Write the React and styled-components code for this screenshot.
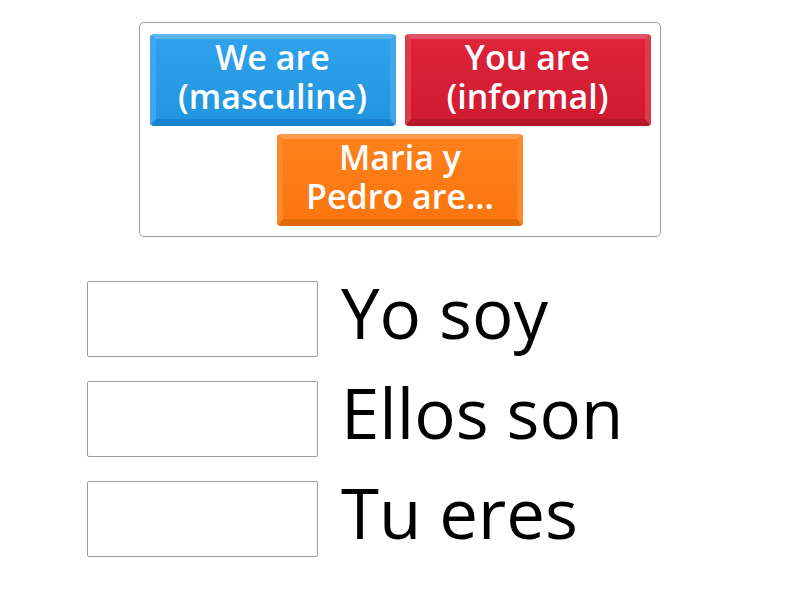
import React from "react";
import styled, { createGlobalStyle } from "styled-components";

const Global = createGlobalStyle`
  html, body { margin: 0; padding: 0; background: #fff; }
  body { font-family: "Open Sans", "Noto Sans", sans-serif; }
`;

const Page = styled.div`
  width: 800px;
  height: 600px;
  display: flex;
  flex-direction: column;
  align-items: center;
  padding-top: 22px;
  box-sizing: border-box;
`;

const Bank = styled.div`
  width: 522px;
  height: 215px;
  box-sizing: border-box;
  border: 1px solid #9a9a9a;
  border-radius: 5px;
  padding: 11px 9px;
  display: flex;
  flex-wrap: wrap;
  justify-content: center;
  align-content: flex-start;
  gap: 8px 9px;
`;

const palettes = {
  blue: { top: "#5ab6f1", side: "#3fa7ec", bottom: "#1a84d0", g1: "#30a2ec", g2: "#2295e0" },
  red: { top: "#e2536a", side: "#de3a4f", bottom: "#b8172a", g1: "#de2439", g2: "#cf1b30" },
  orange: { top: "#ff9c4c", side: "#ff8a2e", bottom: "#e0690b", g1: "#ff801b", g2: "#fb760f" },
};

const Tile = styled.div`
  width: 246px;
  height: 92px;
  box-sizing: border-box;
  border-radius: 4px;
  border-style: solid;
  border-width: 5px 6px 7px 6px;
  border-top-color: ${(p) => palettes[p.$c].top};
  border-left-color: ${(p) => palettes[p.$c].side};
  border-right-color: ${(p) => palettes[p.$c].side};
  border-bottom-color: ${(p) => palettes[p.$c].bottom};
  background: linear-gradient(${(p) => palettes[p.$c].g1}, ${(p) => palettes[p.$c].g2});
  display: flex;
  align-items: center;
  justify-content: center;
  text-align: center;
  color: #fff;
  font-family: "Open Sans", sans-serif;
  font-weight: 600;
  font-size: 34px;
  line-height: 39px;
  padding-bottom: 5px;
`;

const Rows = styled.div`
  margin-top: 44px;
  width: 800px;
  display: flex;
  flex-direction: column;
  gap: 24px;
  padding-left: 87px;
  box-sizing: border-box;
`;

const Row = styled.div`
  display: flex;
  align-items: center;
  gap: 23px;
  height: 76px;
`;

const Slot = styled.div`
  width: 231px;
  height: 76px;
  box-sizing: border-box;
  border: 1px solid #9a9a9a;
  border-radius: 2px;
  background: #fff;
  flex: none;
`;

const Label = styled.div`
  font-family: "Open Sans", sans-serif;
  font-size: 69px;
  color: #000;
  line-height: 76px;
  margin-top: -14px;
  white-space: nowrap;
`;

export default function App() {
  const tiles = [
    { c: "blue", t: ["We are", "(masculine)"] },
    { c: "red", t: ["You are", "(informal)"] },
    { c: "orange", t: ["Maria y", "Pedro are..."] },
  ];
  const rows = ["Yo soy", "Ellos son", "Tu eres"];
  return (
    <>
      <Global />
      <Page>
        <Bank>
          {tiles.map((x) => (
            <Tile key={x.c} $c={x.c}>
              <span>
                {x.t[0]}
                <br />
                {x.t[1]}
              </span>
            </Tile>
          ))}
        </Bank>
        <Rows>
          {rows.map((r) => (
            <Row key={r}>
              <Slot />
              <Label>{r}</Label>
            </Row>
          ))}
        </Rows>
      </Page>
    </>
  );
}
